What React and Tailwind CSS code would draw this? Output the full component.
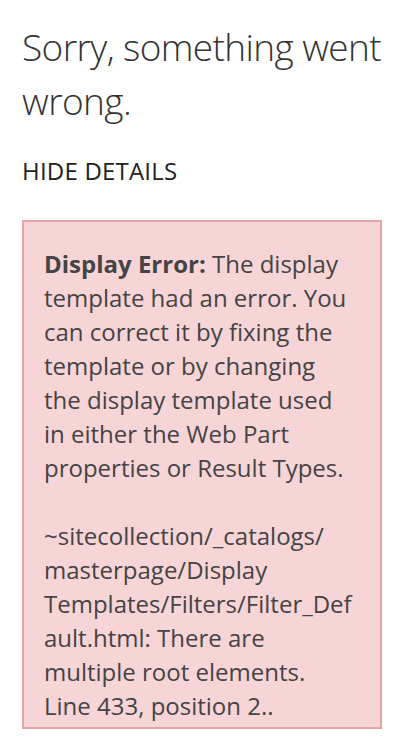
export default function App() {
  const lines = [
    "template had an error. You",
    "can correct it by fixing the",
    "template or by changing",
    "the display template used",
    "in either the Web Part",
    "properties or Result Types.",
  ];
  const path = [
    "~sitecollection/_catalogs/",
    "masterpage/Display",
    "Templates/Filters/Filter_Def",
    "ault.html: There are",
    "multiple root elements.",
    "Line 433, position 2..",
  ];
  return (
    <div className="min-h-screen bg-white px-[22px] pt-[20px] text-[#333]" style={{ fontFamily: '"Open Sans", "Noto Sans", sans-serif' }}>
      <h1 className="whitespace-nowrap text-[37px] font-light leading-[54px] tracking-[-0.6px] text-[#333]">
        <div>Sorry, something went</div>
        <div>wrong.</div>
      </h1>
      <div className="mt-[29px] text-[24px] leading-[28px] tracking-[0.2px] text-[#222]">HIDE DETAILS</div>
      <div className="mt-[35px] w-[360px] border-2 border-[#e9a3a8] bg-[#f7d4d6] px-[20px] pt-[25px] pb-[4px] text-[24px] leading-[34px] text-[#444] whitespace-nowrap">
        <div>
          <span className="font-bold">Display Error:</span> The display
        </div>
        {lines.map((l) => (
          <div key={l}>{l}</div>
        ))}
        <div className="h-[34px]" />
        {path.map((l) => (
          <div key={l}>{l}</div>
        ))}
      </div>
    </div>
  );
}
